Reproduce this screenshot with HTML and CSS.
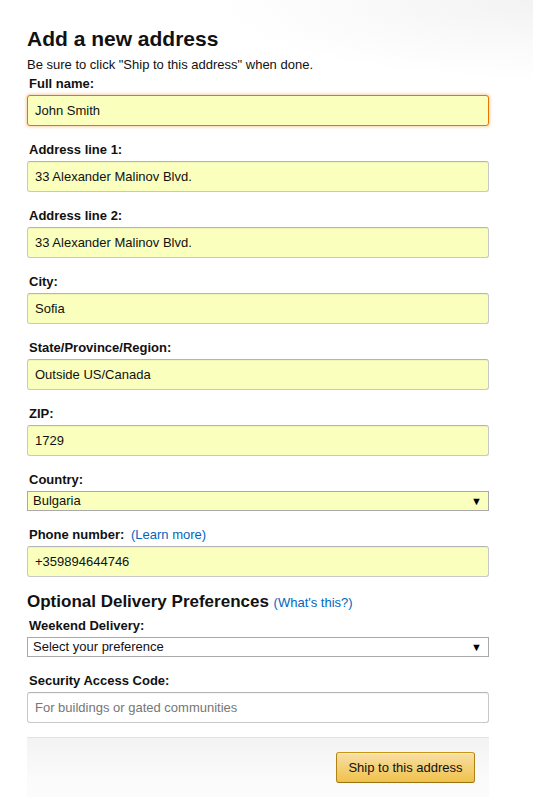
FILE: index.html
```html
<!DOCTYPE html>
<html>
<head>
<meta charset="utf-8">
<link rel="stylesheet" href="styles.css">
</head>
<body>
<div class="page">
  <h1 class="title">Add a new address</h1>
  <p class="hint">Be sure to click "Ship to this address" when done.</p>

  <div class="field">
    <label class="label">Full name:</label>
    <div class="input filled focus">John Smith</div>
  </div>
  <div class="field">
    <label class="label">Address line 1:</label>
    <div class="input filled">33 Alexander Malinov Blvd.</div>
  </div>
  <div class="field">
    <label class="label">Address line 2:</label>
    <div class="input filled">33 Alexander Malinov Blvd.</div>
  </div>
  <div class="field">
    <label class="label">City:</label>
    <div class="input filled">Sofia</div>
  </div>
  <div class="field">
    <label class="label">State/Province/Region:</label>
    <div class="input filled">Outside US/Canada</div>
  </div>
  <div class="field">
    <label class="label">ZIP:</label>
    <div class="input filled">1729</div>
  </div>
  <div class="field">
    <label class="label">Country:</label>
    <div class="select filled"><span>Bulgaria</span><span class="arrow">▼</span></div>
  </div>
  <div class="field">
    <label class="label">Phone number: <a class="link">(Learn more)</a></label>
    <div class="input filled">+359894644746</div>
  </div>

  <h2 class="subtitle">Optional Delivery Preferences <a class="link">(What's this?)</a></h2>
  <div class="field">
    <label class="label">Weekend Delivery:</label>
    <div class="select"><span>Select your preference</span><span class="arrow">▼</span></div>
  </div>
  <div class="field">
    <label class="label">Security Access Code:</label>
    <div class="input placeholder">For buildings or gated communities</div>
  </div>

  <div class="footer">
    <button class="btn">Ship to this address</button>
  </div>
</div>
</body>
</html>
```
FILE: styles.css
```css
html, body {
  margin: 0;
  padding: 0;
}
body {
  font-family: "Liberation Sans", Arial, sans-serif;
  font-size: 13px;
  color: #111;
  background: radial-gradient(ellipse 320px 80px at 540px 0, #f2f2f2 0%, #f9f9f9 50%, #ffffff 100%) no-repeat, #fff;
  height: 797px;
  overflow: hidden;
}
.page {
  width: 462px;
  padding: 26px 0 0 27px;
}
.title {
  font-size: 21px;
  font-weight: bold;
  line-height: 25px;
  margin: 0 0 4px 0;
  color: #111;
}
.hint {
  margin: 0;
  line-height: 19px;
  color: #111;
}
.field {
  margin-bottom: 14px;
}
.label {
  display: block;
  font-weight: bold;
  line-height: 19px;
  margin-bottom: 2px;
  padding-left: 2px;
}
.link {
  font-weight: normal;
  color: #0066c0;
  margin-left: 3px;
}
.input {
  box-sizing: border-box;
  height: 31px;
  border: 1px solid #c8c8c8;
  border-top-color: #b5b5b5;
  border-radius: 3px;
  padding: 0 7px;
  line-height: 29px;
  background: #fff;
  box-shadow: inset 0 1px 0 rgba(0,0,0,0.04);
}
.input.filled {
  background: #faffbd;
}
.input.focus {
  border-color: #e77600;
  box-shadow: 0 0 3px 1px rgba(228,121,17,0.35);
}
.input.placeholder {
  color: #767676;
}
.select {
  box-sizing: border-box;
  height: 20px;
  border: 1px solid #a9a9a9;
  padding: 0 6px 0 5px;
  line-height: 18px;
  display: flex;
  justify-content: space-between;
  align-items: center;
  background: #fff;
  margin-top: 1px;
}
.select.filled {
  background: #faffbd;
}
.arrow {
  font-size: 11px;
  color: #000;
}
.subtitle {
  font-size: 17px;
  font-weight: bold;
  line-height: 20px;
  margin: 0 0 3px 0;
  padding-top: 1px;
}
.subtitle .link {
  font-size: 13px;
  margin-left: 0;
}
.footer {
  box-sizing: border-box;
  height: 70px;
  margin-top: 14px;
  border-top: 1px solid #e3e3e3;
  background: linear-gradient(#f3f3f3, #fbfbfb 60%, #fcfcfc);
  display: flex;
  justify-content: flex-end;
  align-items: flex-start;
  padding: 14px 14px 0 0;
}
.btn {
  font-family: "Liberation Sans", Arial, sans-serif;
  font-size: 13px;
  color: #111;
  height: 31px;
  width: 139px;
  border: 1px solid;
  border-color: #c89411 #b0820f #99710d;
  border-radius: 3px;
  background: linear-gradient(#f7dfa5, #f0c14b);
  box-shadow: inset 0 1px 0 rgba(255,255,255,0.4);
  padding: 0;
}
```
